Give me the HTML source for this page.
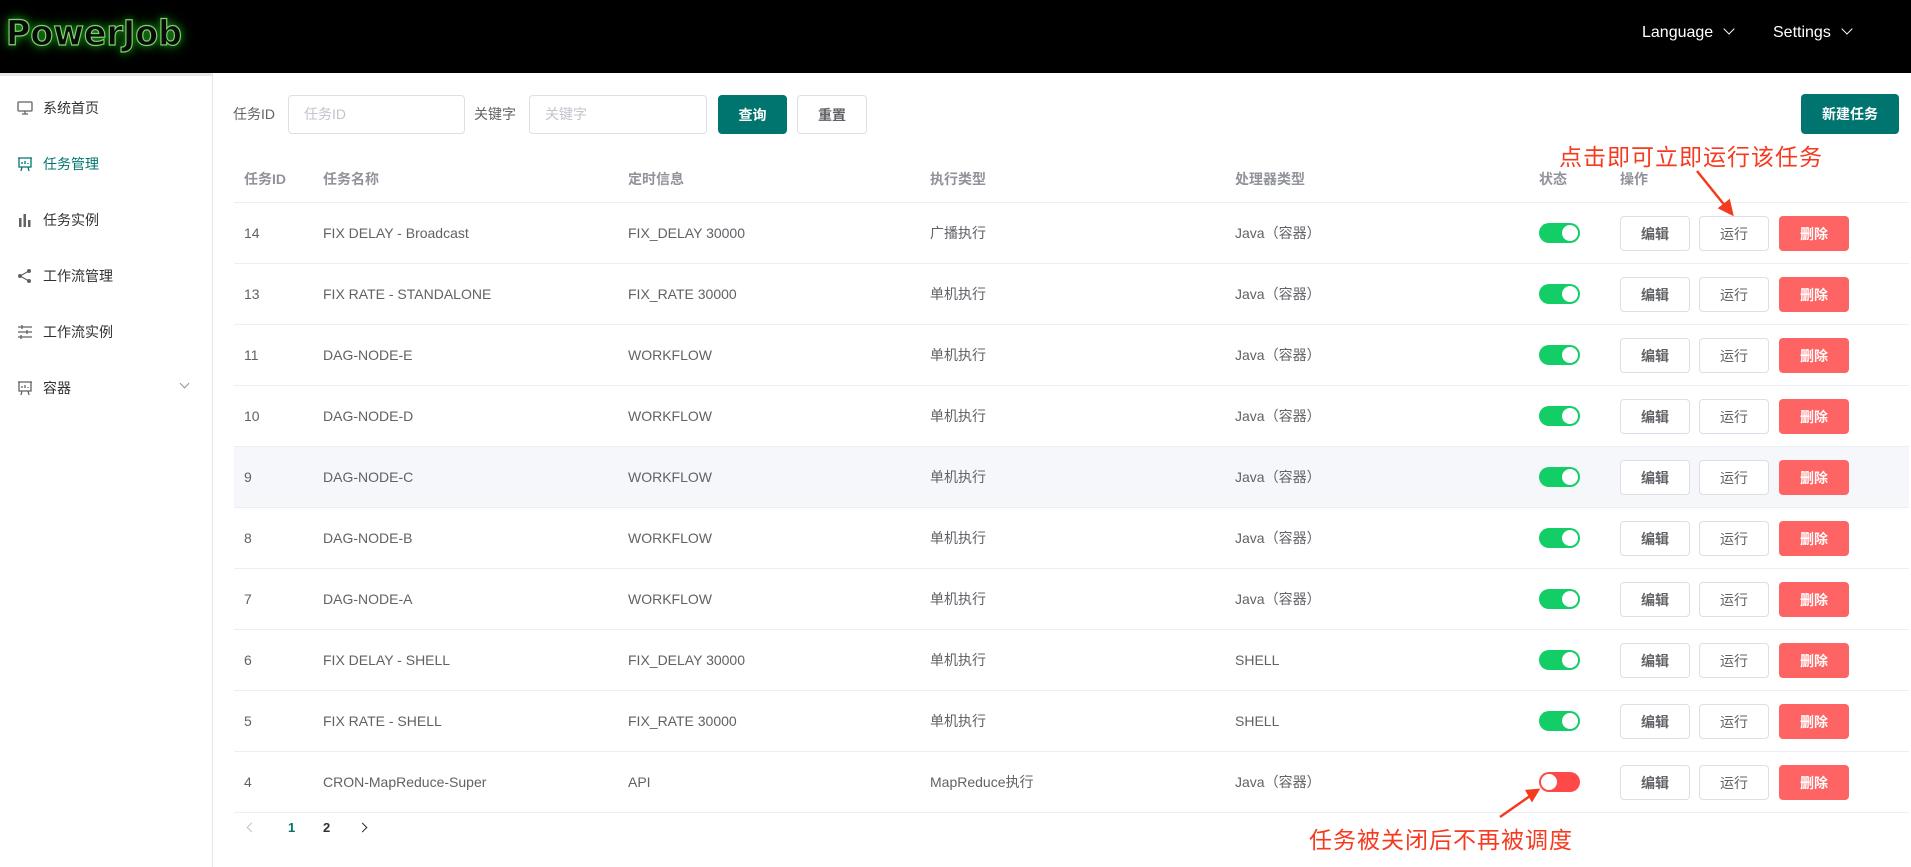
<!DOCTYPE html>
<html><head><meta charset="utf-8"><style>
*{box-sizing:border-box;margin:0;padding:0}
body{width:1911px;height:867px;overflow:hidden;font-family:"Liberation Sans","Noto Sans CJK SC",sans-serif;background:#fff;color:#606266;position:relative}
.hdr{position:absolute;left:0;top:0;width:1911px;height:73px;background:#000}
.logo{position:absolute;left:6px;top:14px;font-size:35px;color:#0a0a0a;font-family:"DejaVu Sans",sans-serif;font-weight:bold;letter-spacing:0px;-webkit-text-stroke:1.2px #7fd36e;text-shadow:0 0 8px #1f8f1f,0 0 14px #0c6a0c;transform:scaleX(0.95);transform-origin:left}
.nav{position:absolute;top:24px;color:#fff;font-size:16px}
.nav:after{content:"";display:inline-block;width:7px;height:7px;border-right:1px solid #fff;border-bottom:1px solid #fff;transform:rotate(45deg);margin-left:12px;position:relative;top:-4px}
.side{position:absolute;left:0;top:73px;width:213px;height:794px;border-right:1px solid #e6e6e6;border-top:3px solid #e6e6e6}
.mi{position:absolute;left:17px;font-size:14px;color:#303133;display:flex;align-items:center;height:20px}
.mi svg{margin-right:10px}
.mi.act{color:#00756f}
.lbl{position:absolute;font-size:14px;color:#606266;top:95px;height:39px;line-height:39px}
.inp{position:absolute;top:95px;height:39px;border:1px solid #dcdfe6;border-radius:4px;font-size:14px;color:#c0c4cc;padding:0 15px;line-height:37px}
.btn{position:absolute;border-radius:4px;font-size:14px;display:flex;align-items:center;justify-content:center;font-weight:bold}
.th,.td{position:absolute;font-size:14px;height:20px;line-height:20px}
.th{color:#909399;font-weight:bold;top:169px}
.line{position:absolute;left:234px;width:1675px;height:1px;background:#ebeef5}
.sw{position:absolute;width:41px;height:20px;border-radius:10px;background:#13ce66}
.sw:after{content:"";position:absolute;top:2px;left:23px;width:16px;height:16px;border-radius:50%;background:#fff}
.sw.off{background:#ff4949}
.sw.off:after{left:2px}
.ob{position:absolute;width:70px;height:35px;border:1px solid #dcdfe6;border-radius:4px;background:#fff;color:#606266;font-size:14px;display:flex;align-items:center;justify-content:center}
.ob.b{font-weight:bold}
.ob.d{background:#fe6464;border-color:#fe6464;color:#fff;font-weight:bold}
.ann{position:absolute;color:#f53a1f;font-size:23px;letter-spacing:1px}
</style></head><body>
<div class="hdr"><div class="logo">PowerJob</div>
<div class="nav" style="left:1642px">Language</div>
<div class="nav" style="left:1773px">Settings</div></div>
<div class="side">
<div class="mi" style="top:22px"><svg width="16" height="16" viewBox="0 0 16 16" fill="none" stroke="#606266" stroke-width="1.3"><rect x="1" y="2" width="14" height="9" rx="1"/><path d="M8 11v3M5 14h6"/></svg>系统首页</div>
<div class="mi act" style="top:78px"><svg width="16" height="16" viewBox="0 0 16 16" fill="none" stroke="#00756f" stroke-width="1.3"><path d="M1 2h14M2 2v9h12V2M5 11l-1 4M11 11l1 4M5 8V6M8 8V5M11 8V7"/></svg>任务管理</div>
<div class="mi" style="top:134px"><svg width="16" height="16" viewBox="0 0 16 16" fill="#606266"><rect x="2" y="6" width="2.5" height="9"/><rect x="6.5" y="2" width="2.5" height="13"/><rect x="11" y="8" width="2.5" height="7"/></svg>任务实例</div>
<div class="mi" style="top:190px"><svg width="16" height="16" viewBox="0 0 16 16" fill="#606266"><circle cx="3" cy="8" r="2"/><circle cx="12" cy="3" r="2"/><circle cx="12" cy="13" r="2"/><path d="M3 8L12 3M3 8l9 5" stroke="#606266" stroke-width="1.2"/></svg>工作流管理</div>
<div class="mi" style="top:246px"><svg width="16" height="16" viewBox="0 0 16 16" fill="none" stroke="#606266" stroke-width="1.3"><path d="M1 3h14M1 8h14M1 13h14"/><path d="M5 1v4M10 6v4M4 11v4"/></svg>工作流实例</div>
<div class="mi" style="top:302px"><svg width="16" height="16" viewBox="0 0 16 16" fill="none" stroke="#606266" stroke-width="1.3"><path d="M1 2h14M2 2v9h12V2M5 11l-1 4M11 11l1 4M5 8V6M8 8V5M11 8V7"/></svg>容器</div>
<div style="position:absolute;left:181px;top:304px;width:7px;height:7px;border-right:1px solid #909399;border-bottom:1px solid #909399;transform:rotate(45deg)"></div>
</div>
<div class="lbl" style="left:233px">任务ID</div>
<div class="inp" style="left:288px;width:177px">任务ID</div>
<div class="lbl" style="left:474px">关键字</div>
<div class="inp" style="left:529px;width:178px">关键字</div>
<div class="btn" style="left:718px;top:95px;width:69px;height:39px;background:#00756f;color:#fff">查询</div>
<div class="btn" style="left:797px;top:95px;width:70px;height:39px;border:1px solid #dcdfe6;color:#606266">重置</div>
<div class="btn" style="left:1801px;top:94px;width:98px;height:40px;background:#00756f;color:#fff">新建任务</div>
<div class="th" style="left:244px">任务ID</div><div class="th" style="left:323px">任务名称</div><div class="th" style="left:628px">定时信息</div><div class="th" style="left:930px">执行类型</div><div class="th" style="left:1235px">处理器类型</div><div class="th" style="left:1539px">状态</div><div class="th" style="left:1620px">操作</div>
<div class="line" style="top:202px"></div>
<div style="position:absolute;left:234px;top:447px;width:1675px;height:61px;background:#f5f7fa"></div>
<div id="rows"></div>
<script>
var d=[["14","FIX DELAY - Broadcast","FIX_DELAY 30000","广播执行","Java（容器）",1],["13","FIX RATE - STANDALONE","FIX_RATE 30000","单机执行","Java（容器）",1],["11","DAG-NODE-E","WORKFLOW","单机执行","Java（容器）",1],["10","DAG-NODE-D","WORKFLOW","单机执行","Java（容器）",1],["9","DAG-NODE-C","WORKFLOW","单机执行","Java（容器）",1],["8","DAG-NODE-B","WORKFLOW","单机执行","Java（容器）",1],["7","DAG-NODE-A","WORKFLOW","单机执行","Java（容器）",1],["6","FIX DELAY - SHELL","FIX_DELAY 30000","单机执行","SHELL",1],["5","FIX RATE - SHELL","FIX_RATE 30000","单机执行","SHELL",1],["4","CRON-MapReduce-Super","API","MapReduce执行","Java（容器）",0]];
var h="",xs=[244,323,628,930,1235];
d.forEach(function(r,i){var t=202+i*61,c=t+31;
for(var j=0;j<5;j++)h+='<div class="td" style="left:'+xs[j]+'px;top:'+(c-10)+'px">'+r[j]+'</div>';
h+='<div class="sw'+(r[5]?'':' off')+'" style="left:1539px;top:'+(c-10)+'px"></div>';
h+='<div class="ob b" style="left:1620px;top:'+(c-17)+'px">编辑</div><div class="ob" style="left:1699px;top:'+(c-17)+'px">运行</div><div class="ob d" style="left:1779px;top:'+(c-17)+'px">删除</div>';
h+='<div class="line" style="top:'+(t+61)+'px"></div>';});
document.getElementById('rows').innerHTML=h;
</script>
<div style="position:absolute;left:248px;top:824px;width:7px;height:7px;border-left:1px solid #c0c4cc;border-bottom:1px solid #c0c4cc;transform:rotate(45deg)"></div>
<div style="position:absolute;left:288px;top:820px;font-size:13px;font-weight:bold;color:#00756f">1</div>
<div style="position:absolute;left:323px;top:820px;font-size:13px;font-weight:bold;color:#303133">2</div>
<div style="position:absolute;left:359px;top:824px;width:7px;height:7px;border-right:1px solid #303133;border-top:1px solid #303133;transform:rotate(45deg)"></div>
<div class="ann" style="left:1559px;top:138px">点击即可立即运行该任务</div>
<div class="ann" style="left:1309px;top:821px">任务被关闭后不再被调度</div>
<svg style="position:absolute;left:0;top:0" width="1911" height="867"><g stroke="#f53a1f" stroke-width="2.5" fill="#f53a1f"><line x1="1697" y1="171" x2="1726" y2="207"/><polygon points="1732,214 1720,208 1729,201"/><line x1="1500" y1="817" x2="1530" y2="796"/><polygon points="1538,790 1527,791 1532,800"/></g></svg>
</body></html>
